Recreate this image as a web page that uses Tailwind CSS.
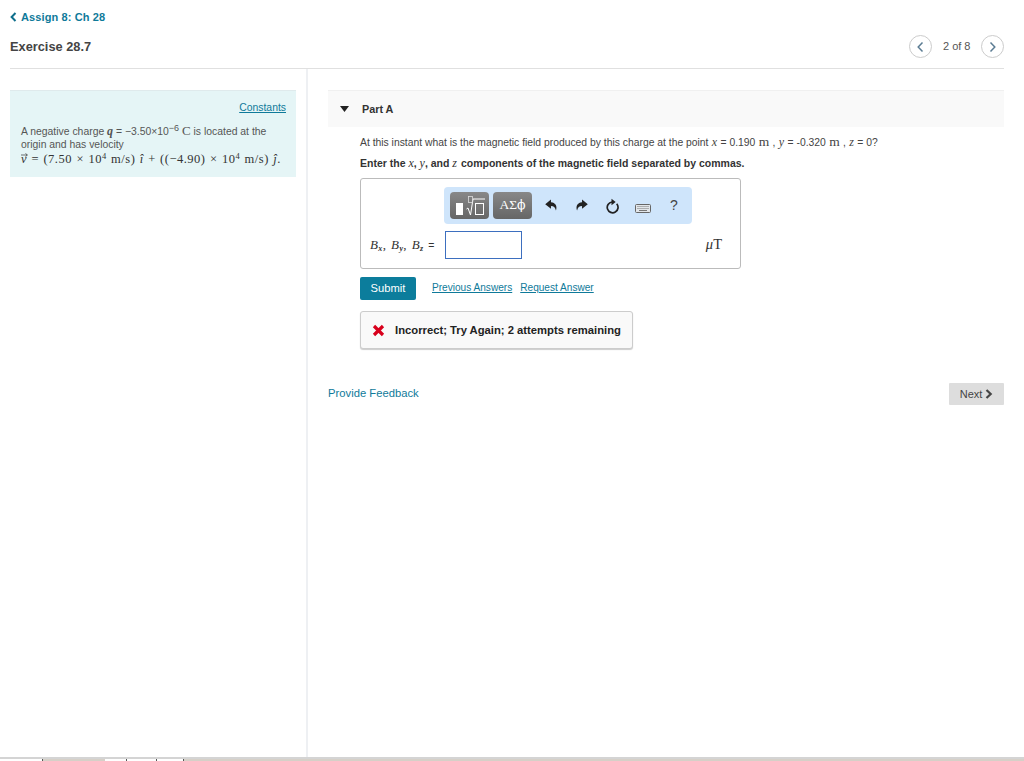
<!DOCTYPE html>
<html lang="en">
  <head>
    <meta charset="UTF-8" />
    <meta name="viewport" content="width=device-width, initial-scale=1.0" />
    <script src="https://cdn.jsdelivr.net/npm/@tailwindcss/browser@4"></script>
    <title>Exercise 28.7</title>
  </head>
  <body class="bg-white font-['Liberation_Sans',Arial,sans-serif] text-[#333]">
    <div class="h-[761px] flex flex-col overflow-hidden">
      <!-- Header -->
      <div class="pl-[10px] pr-[20px] shrink-0">
        <a class="h-[24px] pt-[10px] flex items-center gap-[4px] text-[11px] leading-[14px] font-bold tracking-[0.12px] text-[#0f7a9a]">
          <svg width="7" height="10" viewBox="0 0 7 10"><path d="M5.500 1 1.600 5l3.900 4" fill="none" stroke="#0f6f8c" stroke-width="2"/></svg>
          <span>Assign 8: Ch 28</span>
        </a>
        <div class="h-[23px] box-content flex items-center justify-between border-b border-[#e0e0e0] pt-[11px] pb-[10px]">
          <h1 class="text-[12.8px] font-bold text-[#444]">Exercise 28.7</h1>
          <div class="flex items-center text-[11px] text-[#555]">
            <span class="w-[23px] h-[23px] rounded-full border border-[#ccc] flex items-center justify-center">
              <svg width="9" height="12" viewBox="0 0 9 12"><path d="M6.500 1.500 2.200 6l4.300 4.500" fill="none" stroke="#5b7c93" stroke-width="1.500"/></svg>
            </span>
            <span class="mx-[10.5px]">2 of 8</span>
            <span class="w-[23px] h-[23px] rounded-full border border-[#ccc] flex items-center justify-center">
              <svg width="9" height="12" viewBox="0 0 9 12"><path d="M2.500 1.500 6.800 6l-4.300 4.500" fill="none" stroke="#5b7c93" stroke-width="1.500"/></svg>
            </span>
          </div>
        </div>
      </div>

      <div class="flex flex-1 min-h-0">
        <!-- Left column -->
        <div class="w-[308px] shrink-0 border-r-2 border-[#eef0f3] pl-[10px] pt-[21px]">
          <div class="w-[286px] h-[87px] bg-[#e5f5f6] border-t border-[#dfeaec] pl-[11px] pr-[10px] pt-[10px]">
            <div class="text-right text-[10.4px] leading-[13px] text-[#0f7a9a] underline">Constants</div>
            <p class="mt-[10px] text-[10.4px] leading-[13px] text-[#555]">
              A negative charge <i class="font-['Liberation_Serif',serif] font-bold text-[12px]">q</i> = &minus;3.50&times;10<sup class="text-[9px] leading-none">&minus;6</sup> <span class="font-['Liberation_Serif',serif] text-[13px]">C</span> is located at the<br />origin and has velocity
            </p>
            <p class="font-['Liberation_Serif',serif] text-[12.500px] leading-[14px] mt-[1px] text-[#333] whitespace-nowrap tracking-[0.5px] [word-spacing:0.8px]">
              <span class="relative inline-block"><i>v</i><svg class="absolute left-0 top-[1px]" width="7" height="4" viewBox="0 0 7 4"><path d="M0 2h6M4.500.500 6.500 2 4.500 3.500" fill="none" stroke="#333" stroke-width=".7"/></svg></span> = (7.50 &times; 10<sup class="text-[8.500px] leading-none">4</sup> m/s) <i>&icirc;</i> + ((&minus;4.90) &times; 10<sup class="text-[8.500px] leading-none">4</sup> m/s) <i>&#309;</i>.
            </p>
          </div>
        </div>

        <!-- Right column -->
        <div class="flex-1 pl-[20px] pr-[20px] pt-[21px] flex flex-col">
          <div class="h-[37px] bg-[#f9f9f9] border-t border-[#f0f0f0] flex items-center pl-[12px]">
            <svg width="9" height="6" viewBox="0 0 9 6"><path d="M0 0h9L4.500 6z" fill="#222"/></svg>
            <span class="ml-[13px] text-[10.800px] font-bold text-[#333]">Part A</span>
          </div>

          <div class="pl-[32px]">
            <p class="mt-[8px] text-[10.350px] leading-[14px] text-[#444] whitespace-nowrap">
              At this instant what is the magnetic field produced by this charge at the point <i class="font-['Liberation_Serif',serif] text-[12px] px-[0.5px]">x</i> = 0.190 <span class="font-['Liberation_Serif',serif] text-[13.500px] px-[0.5px]">m</span> , <i class="font-['Liberation_Serif',serif] text-[12px] px-[0.5px]">y</i> = -0.320 <span class="font-['Liberation_Serif',serif] text-[13.500px] px-[0.5px]">m</span> , <i class="font-['Liberation_Serif',serif] text-[12px] px-[0.5px]">z</i> = 0?
            </p>
            <p class="mt-[6px] text-[10.500px] leading-[14px] font-bold text-[#333] whitespace-nowrap">
              Enter the <i class="font-['Liberation_Serif',serif] font-normal text-[12px]">x</i>, <i class="font-['Liberation_Serif',serif] font-normal text-[12px]">y</i>, and <i class="font-['Liberation_Serif',serif] font-normal text-[12px] pr-[1px]">z</i> components of the magnetic field separated by commas.
            </p>

            <!-- Answer box -->
            <div class="mt-[8px] w-[381px] h-[91px] border border-[#bbb] rounded-[3px] pt-[8px]">
              <div class="ml-[83px] w-[248px] h-[37px] bg-[#cfe5fb] rounded-[4px] flex items-center pl-[6px]">
                <span class="w-[39px] h-[27px] rounded-[4px] bg-gradient-to-b from-[#888] to-[#666] flex items-center justify-center">
                  <svg width="37" height="25" viewBox="0 0 37 25">
                    <rect x="5" y="10" width="7" height="12" fill="#fff"/>
                    <path d="M15.500 16l1.500-1 2.500 7 2.500-16h12" fill="none" stroke="#fff" stroke-width="1"/>
                    <rect x="24.500" y="10.500" width="8" height="11" fill="none" stroke="#fff"/>
                    <rect x="17.500" y="3.500" width="4" height="6" fill="none" stroke="#ddd" stroke-width=".8"/>
                  </svg>
                </span>
                <span class="ml-[4px] w-[39px] h-[27px] rounded-[4px] bg-gradient-to-b from-[#888] to-[#666] flex items-center justify-center font-['Liberation_Serif',serif] text-[13.500px] text-white">&Alpha;&Sigma;<span class="font-['DejaVu_Serif',serif] text-[12.500px]">&#981;</span></span>
                <svg class="ml-[13px]" width="13" height="13" viewBox="0 0 12 12"><path d="M5.500 .5 .2 4.800l5.300 4.300V6.500c2.600 0 3.900 1.200 4.600 4.200 1.400-4.200-.4-7.300-4.600-7.700z" fill="#222"/></svg>
                <svg class="ml-[17px]" width="13" height="13" viewBox="0 0 12 12"><path d="M6.500 .5l5.300 4.300-5.300 4.300V6.500c-2.600 0-3.900 1.200-4.600 4.200C.5 6.500 2.300 3.400 6.500 3z" fill="#222"/></svg>
                <svg class="ml-[17px]" width="15" height="16" viewBox="0 0 15 16"><path d="M11.700 5.800A5.400 5.400 0 1 1 7 4" fill="none" stroke="#222" stroke-width="1.700"/><path d="M6.500 .8v6.400l4.200-3.200z" fill="#222"/></svg>
                <svg class="ml-[15px] mt-[6px]" width="16" height="9" viewBox="0 0 16 9">
                  <rect x=".5" y=".5" width="15" height="8" rx="1" fill="#e2e6ea" stroke="#666"/>
                  <path d="M2.500 2.500h11M2.500 4.500h11" stroke="#777" stroke-dasharray="1 1"/>
                  <path d="M4 6.500h8" stroke="#777"/>
                </svg>
                <span class="ml-[19px] text-[14px] text-[#444]">?</span>
              </div>
              <div class="flex items-center mt-[7px] pl-[9px] pr-[18px]">
                <span class="w-[75px] text-[13px] font-['Liberation_Serif',serif] whitespace-nowrap text-[#333] tracking-[0.4px] [word-spacing:1px]"><i>B<sub class="text-[8px] font-bold">x</sub></i>, <i>B<sub class="text-[8px] font-bold">y</sub></i>, <i>B<sub class="text-[8px] font-bold">z</sub></i> <span class="font-['Liberation_Sans',sans-serif] text-[10.500px]">=</span></span>
                <div class="w-[77px] h-[28px] border border-[#3d6fbf] bg-white"></div>
                <span class="ml-auto font-['Liberation_Serif',serif] text-[14.500px] text-[#333]"><i>&mu;</i>T</span>
              </div>
            </div>

            <!-- Actions -->
            <div class="mt-[8px] flex items-start">
              <button class="w-[56px] h-[23px] bg-[#0c7d9c] rounded-[2px] text-white text-[11.200px]">Submit</button>
              <a class="ml-[16px] mt-[4px] text-[10.100px] leading-[13px] font-medium text-[#0f7a9a] underline">Previous Answers</a>
              <a class="ml-[8px] mt-[4px] text-[10.100px] leading-[13px] font-medium text-[#0f7a9a] underline">Request Answer</a>
            </div>

            <div class="mt-[11px] w-[273px] h-[38px] bg-[#f9f9f9] border border-[#ccc] rounded-[3px] shadow-[0_1px_1px_rgba(0,0,0,0.2)] flex items-center pl-[11px]">
              <svg width="13" height="13" viewBox="0 0 13 13"><path d="M2 2l9 9M11 2l-9 9" stroke="#d8001c" stroke-width="3.200"/></svg>
              <span class="ml-[10px] text-[11.250px] font-bold text-[#222] whitespace-nowrap">Incorrect; Try Again; 2 attempts remaining</span>
            </div>
          </div>

          <div class="mt-[34px] flex items-center justify-between">
            <a class="mb-[2px] text-[11.250px] text-[#0f7a9a]">Provide Feedback</a>
            <button class="w-[55px] h-[22px] bg-[#ddd] rounded-[1px] flex items-center justify-center gap-[3px] text-[11px] text-[#444]">
              Next
              <svg width="8" height="10" viewBox="0 0 8 10"><path d="M1.500 1 5.700 5 1.500 9" fill="none" stroke="#444" stroke-width="2.200"/></svg>
            </button>
          </div>
        </div>
      </div>

      <!-- Bottom edge -->
      <div class="h-[4px] shrink-0 bg-[#d6d0c8] border-t-2 border-[#d4d4d4]">
        <div class="flex h-full">
          <div class="w-[43px] bg-white border-r border-[#555]"></div>
          <div class="w-[62px]"></div>
          <div class="w-[22px] bg-white border-r border-[#555]"></div>
          <div class="w-[30px] bg-white border-r border-[#555]"></div>
          <div class="w-[27px] bg-white border-r border-[#555]"></div>
        </div>
      </div>
    </div>
  </body>
</html>
